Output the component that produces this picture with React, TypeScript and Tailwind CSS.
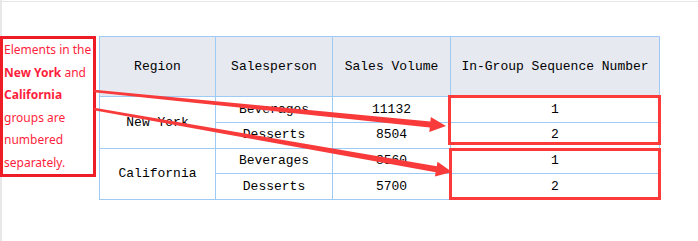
import React from 'react'

type Row = { region?: string; span?: number; item: string; volume: string; seq: string }

const rows: Row[] = [
  { region: 'New York', span: 2, item: 'Beverages', volume: '11132', seq: '1' },
  { item: 'Desserts', volume: '8504', seq: '2' },
  { region: 'California', span: 2, item: 'Beverages', volume: '8560', seq: '1' },
  { item: 'Desserts', volume: '5700', seq: '2' },
]

// tapered arrow: thin at the start, wider near the head
function arrow(x1: number, y1: number, x2: number, y2: number, head = 16, hw = 7.5) {
  const dx = x2 - x1
  const dy = y2 - y1
  const len = Math.hypot(dx, dy)
  const ux = dx / len
  const uy = dy / len
  const nx = -uy
  const ny = ux
  const bx = x2 - ux * head
  const by = y2 - uy * head
  const p = (x: number, y: number) => `${x.toFixed(1)},${y.toFixed(1)}`
  return [
    p(x1 + nx * 1.2, y1 + ny * 1.2),
    p(bx + nx * 3, by + ny * 3),
    p(bx + nx * hw, by + ny * hw),
    p(x2, y2),
    p(bx - nx * hw, by - ny * hw),
    p(bx - nx * 3, by - ny * 3),
    p(x1 - nx * 1.2, y1 - ny * 1.2),
  ].join(' ')
}

const cell = 'border border-[#9dcbf5] text-center align-middle'

export default function App() {
  return (
    <div className="relative w-[698px] h-[241px] bg-white overflow-hidden">
      <div className="absolute left-0 top-px w-full border-t border-[#e6e6e6]" />
      <div className="absolute left-0 top-0 h-full border-l-2 border-[#e8e8e8]" />

      <div className="relative flex items-start pt-[36px]">
        <div
          className="w-[96px] h-[141px] border-[3px] border-[#ee1c25] pl-px text-[12px] leading-[22.6px] text-[#ff1f3d] bg-white"
          style={{ fontFamily: '"Noto Sans", "Open Sans", sans-serif' }}
        >
          Elements in the <b>New York</b> and <b>California</b> groups are numbered separately.
        </div>

        <table
          className="ml-[3px] w-[560px] table-fixed border-collapse text-[13px] text-black"
          style={{ fontFamily: '"Liberation Mono", "DejaVu Sans Mono", monospace' }}
        >
          <colgroup>
            <col className="w-[116px]" />
            <col className="w-[117px]" />
            <col className="w-[118px]" />
            <col className="w-[209px]" />
          </colgroup>
          <thead>
            <tr className="h-[60px] bg-[#e6e9f0]">
              <th className={`${cell} font-normal`}>Region</th>
              <th className={`${cell} font-normal`}>Salesperson</th>
              <th className={`${cell} font-normal`}>Sales Volume</th>
              <th className={`${cell} font-normal`}>In-Group Sequence Number</th>
            </tr>
          </thead>
          <tbody>
            {rows.map((r, i) => (
              <tr key={i} className="h-[25.8px]">
                {r.region && (
                  <td rowSpan={r.span} className={cell}>
                    {r.region}
                  </td>
                )}
                <td className={cell}>{r.item}</td>
                <td className={cell}>{r.volume}</td>
                <td className={cell}>{r.seq}</td>
              </tr>
            ))}
          </tbody>
        </table>
      </div>

      <svg className="absolute inset-0 pointer-events-none" width="698" height="241">
        <polygon points={arrow(94, 91, 446, 126)} fill="#f83a3a" />
        <polygon points={arrow(94, 109, 452, 172)} fill="#f83a3a" />
        <rect x="449.5" y="96.5" width="210" height="47" fill="none" stroke="#fc3a3a" strokeWidth="3" />
        <rect x="450.5" y="149.5" width="209" height="49" fill="none" stroke="#fc3a3a" strokeWidth="3" />
      </svg>
    </div>
  )
}
